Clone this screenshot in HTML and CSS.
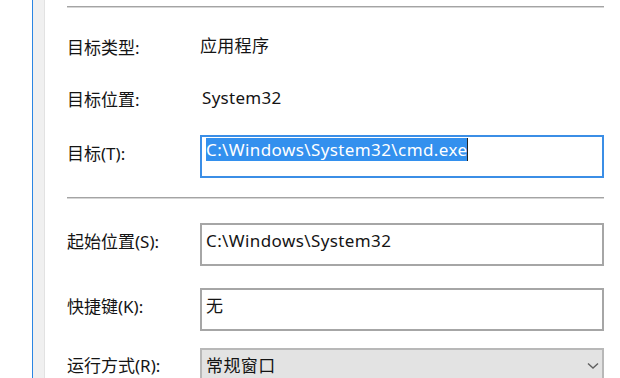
FILE: index.html
```html
<!DOCTYPE html>
<html lang="zh-CN">
<head>
    <meta charset="UTF-8">
    <meta name="viewport" content="width=device-width, initial-scale=1.0">
    <title>cmd.exe 属性</title>
    <link rel="stylesheet" href="styles.css">
</head>
<body>
    <div class="frame">
        <div class="edge"></div>
        <div class="accent"></div>
        <div class="rail"></div>
        <div class="panel">
            <div class="sep"></div>

            <div class="row row-type">
                <span class="label">目标类型:</span>
                <span class="value">应用程序</span>
            </div>
            <div class="row row-loc">
                <span class="label">目标位置:</span>
                <span class="value">System32</span>
            </div>
            <div class="row row-field row-target">
                <span class="label">目标(T):</span>
                <div class="field focused">
                    <span class="selected">C:\Windows\System32\cmd.exe</span>
                </div>
            </div>

            <div class="sep sep-mid"></div>

            <div class="row row-field row-start">
                <span class="label">起始位置(S):</span>
                <div class="field">C:\Windows\System32</div>
            </div>
            <div class="row row-field row-key">
                <span class="label">快捷键(K):</span>
                <div class="field">无</div>
            </div>
            <div class="row row-field row-run">
                <span class="label">运行方式(R):</span>
                <div class="field combo">
                    <span>常规窗口</span>
                    <svg class="chevron" width="12" height="8" viewBox="0 0 12 8">
                        <path d="M1 1.5 L6 6 L11 1.5" fill="none" stroke="#606060" stroke-width="1.4"/>
                    </svg>
                </div>
            </div>
        </div>
    </div>
</body>
</html>
```

FILE: styles.css
```css
html, body {
    margin: 0;
    padding: 0;
    background: #fff;
}
body {
    font-family: "Noto Sans", "Noto Sans CJK SC", sans-serif;
    font-size: 17px;
    color: #141414;
    overflow: hidden;
}
.frame {
    display: flex;
    height: 378px;
}
.edge {
    width: 32px;
    background: #fff;
}
.accent {
    width: 1px;
    background: #2b86e3;
}
.rail {
    width: 11px;
    background: #f0f0f0;
    border-right: 1px solid #e2e2e2;
}
.panel {
    flex: 1;
    padding: 6px 16px 0 22px;
}
.sep {
    height: 0;
    border-top: 1px solid #a4a4a4;
    border-bottom: 1px solid #d6d6d6;
}
.row {
    display: flex;
    align-items: center;
}
.label {
    width: 133px;
    flex: none;
}
.value {
    line-height: 26px;
    letter-spacing: 0.3px;
}
.row-type {
    margin-top: 25px;
    height: 26px;
}
.row-loc {
    margin-top: 26px;
    height: 26px;
}
.row-loc .value {
    padding-left: 2px;
}
.row-field {
    align-items: flex-start;
}
.row-field .label {
    line-height: 24px;
    padding-top: 7px;
}
.row-target {
    margin-top: 24px;
}
.sep-mid {
    margin-top: 19px;
}
.row-start {
    margin-top: 24px;
}
.row-key {
    margin-top: 22px;
}
.row-run {
    margin-top: 17px;
}
.row-run .label {
    padding-top: 6px;
}
.field {
    flex: 1;
    height: 43px;
    box-sizing: border-box;
    border: 2px solid #a6a6a6;
    padding: 4px 0 0 4px;
    line-height: 24px;
    letter-spacing: 0.4px;
    background: #fff;
}
.focused {
    border-color: #3b8ee6;
    padding-top: 1px;
}
.selected {
    background: #3390ee;
    color: #fff;
    border-right: 1px solid #222;
}
.combo {
    display: flex;
    justify-content: space-between;
    background: #e3e3e3;
    border-color: #b8b8b8;
}
.chevron {
    margin: 8px 3px 0 0;
}
```
